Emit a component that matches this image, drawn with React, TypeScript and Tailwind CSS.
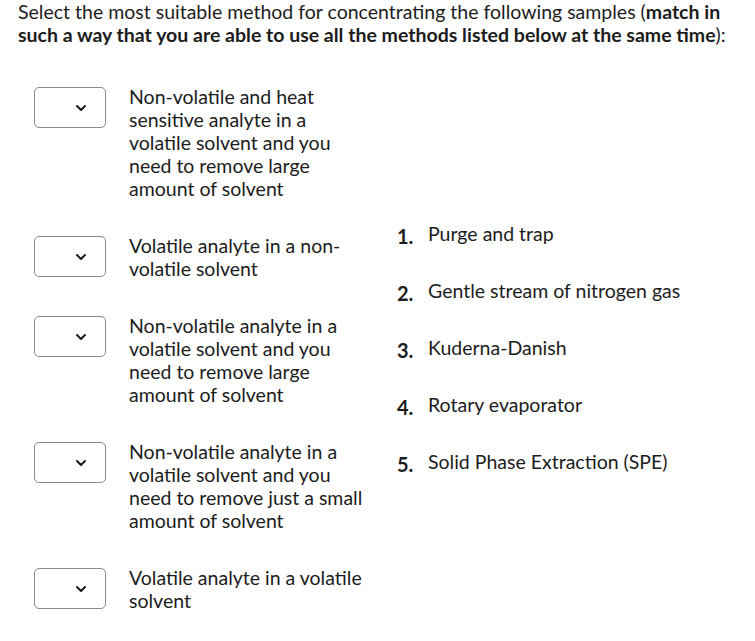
import React from "react";

const SAMPLES: string[] = [
  "Non-volatile and heat sensitive analyte in a volatile solvent and you need to remove large amount of solvent",
  "Volatile analyte in a non-volatile solvent",
  "Non-volatile analyte in a volatile solvent and you need to remove large amount of solvent",
  "Non-volatile analyte in a volatile solvent and you need to remove just a small amount of solvent",
  "Volatile analyte in a volatile solvent",
];

const METHODS: string[] = [
  "Purge and trap",
  "Gentle stream of nitrogen gas",
  "Kuderna-Danish",
  "Rotary evaporator",
  "Solid Phase Extraction (SPE)",
];

function Chevron() {
  return (
    <svg width="12" height="8" viewBox="0 0 12 8" fill="none">
      <path
        d="M2 2l4 4 4-4"
        stroke="#1a1a1a"
        strokeWidth="2"
        strokeLinecap="round"
        strokeLinejoin="round"
      />
    </svg>
  );
}

export default function App() {
  return (
    <div
      className="min-h-[641px] w-[755px] bg-white px-[18px] text-[19.5px] leading-[23px] text-[#1c1c1c]"
      style={{ fontFamily: "Lato, 'Liberation Sans', sans-serif" }}
    >
      <p>
        Select the most suitable method for concentrating the following samples (
        <b>match in such a way that you are able to use all the methods listed below at the same time</b>):
      </p>

      <div className="mt-[39px] flex">
        {/* Left: dropdown + sample description */}
        <div className="flex flex-col gap-[34px] pl-[16px]">
          {SAMPLES.map((s, i) => (
            <div key={i} className="flex items-start">
              <div className="mt-[2px] flex h-[41px] w-[72px] shrink-0 items-center justify-end rounded-[5px] border border-[#8a8a8a] pr-[18px]">
                <Chevron />
              </div>
              <p className="ml-[23px] w-[242px]">{s}</p>
            </div>
          ))}
        </div>

        {/* Right: numbered methods */}
        <ol className="ml-[26px] flex flex-col gap-[31px] self-center">
          {METHODS.map((m, i) => (
            <li key={i} className="flex items-start">
              <span className="w-[31px] shrink-0 pt-[3px] text-[20px] font-bold">{i + 1}.</span>
              <span>{m}</span>
            </li>
          ))}
        </ol>
      </div>
    </div>
  );
}
